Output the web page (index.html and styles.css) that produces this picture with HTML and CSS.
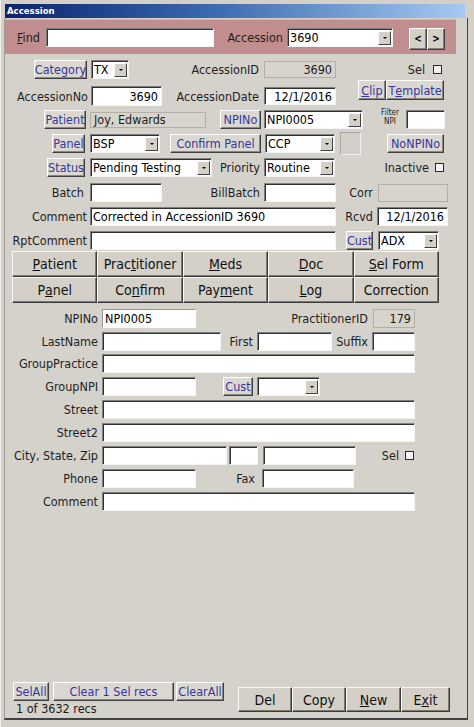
FILE: index.html
```html
<!DOCTYPE html>
<html>
<head>
<meta charset="utf-8">
<title>Accession</title>
<link rel="stylesheet" href="styles.css">
</head>
<body>
<div class="win">
  <div class="title">Accession</div>
  <div class="content">
    <div class="findbar">
      <span class="lbl w35"><u>F</u>ind</span>
      <div class="inp ml6 w168"></div>
      <span class="lbl w69">Accession</span>
      <div class="inp combo ml4 w106"><span class="val">3690</span><span class="dd"></span></div>
      <div class="nav ml16"><span class="navbtn">&lt;</span><span class="navbtn">&gt;</span></div>
    </div>

    <div class="row r1">
      <span class="btn ml29 w53">Category</span>
      <div class="inp combo ml4 w38"><span class="val">TX</span><span class="dd"></span></div>
      <span class="lbl w130">AccessionID</span>
      <div class="ro num ml5 w72 h17">3690</div>
      <span class="lbl w89">Sel</span>
      <span class="chk ml8"></span>
    </div>

    <div class="row r2">
      <span class="lbl w83">AccessionNo</span>
      <div class="inp num ml3 w71 h20">3690</div>
      <span class="lbl w97">AccessionDate</span>
      <div class="inp num ml5 w72 h18">12/1/2016</div>
      <div class="pair ml22">
        <span class="btn w28"><u>C</u>lip</span><span class="btn w58">T<u>e</u>mplate</span>
      </div>
    </div>

    <div class="row r3">
      <span class="btn ml39 w42">Patient</span>
      <div class="ro ml4 w116 h16">Joy, Edwards</div>
      <span class="btn ml14 w41">NPINo</span>
      <div class="inp combo ml3 w99"><span class="val">NPI0005</span><span class="dd"></span></div>
      <span class="filter ml17 w20">Filter<br>NPI</span>
      <div class="inp ml6 w39"></div>
    </div>

    <div class="row r4">
      <span class="btn ml47 w33">Panel</span>
      <div class="inp combo ml5 w70"><span class="val">BSP</span><span class="dd"></span></div>
      <span class="btn ml10 w91">Confirm Panel</span>
      <div class="inp combo ml4 w70"><span class="val">CCP</span><span class="dd"></span></div>
      <span class="swatch ml5"></span>
      <span class="btn ml26 w57">NoNPINo</span>
    </div>

    <div class="row r5">
      <span class="btn ml42 w38">Status</span>
      <div class="inp combo ml5 w122"><span class="val">Pending Testing</span><span class="dd"></span></div>
      <span class="lbl w48">Priority</span>
      <div class="inp combo ml4 w71"><span class="val">Routine</span><span class="dd"></span></div>
      <span class="lbl w94">Inactive</span>
      <span class="chk ml6"></span>
    </div>

    <div class="row r6">
      <span class="lbl w79">Batch</span>
      <div class="inp ml6 w72"></div>
      <span class="lbl w98">BillBatch</span>
      <div class="inp ml4 w72"></div>
      <span class="lbl w37">Corr</span>
      <div class="ro ml5 w70 h18"></div>
    </div>

    <div class="row r7">
      <span class="lbl w82">Comment</span>
      <div class="inp ml3 w246">Corrected in AccessionID 3690</div>
      <span class="lbl w37">Rcvd</span>
      <div class="inp num ml4 w71">12/1/2016</div>
    </div>

    <div class="row r8">
      <span class="lbl w82">RptComment</span>
      <div class="inp ml3 w246"></div>
      <span class="btn ml10 w27">Cust</span>
      <div class="inp combo ml5 w61"><span class="val">ADX</span><span class="dd"></span></div>
    </div>

    <div class="tabs">
      <span class="tab"><u>P</u>atient</span>
      <span class="tab">Prac<u>t</u>itioner</span>
      <span class="tab"><u>M</u>eds</span>
      <span class="tab"><u>D</u>oc</span>
      <span class="tab"><u>S</u>el Form</span>
      <span class="tab">P<u>a</u>nel</span>
      <span class="tab">Co<u>n</u>firm</span>
      <span class="tab">Pay<u>m</u>ent</span>
      <span class="tab"><u>L</u>og</span>
      <span class="tab">Correction</span>
    </div>

    <div class="row s1">
      <span class="lbl w93">NPINo</span>
      <div class="inp thin ml4 w94">NPI0005</div>
      <span class="lbl w172">PractitionerID</span>
      <div class="ro num ml5 w42">179</div>
    </div>
    <div class="row s2">
      <span class="lbl w93">LastName</span>
      <div class="inp ml4 w119"></div>
      <span class="lbl w32">First</span>
      <div class="inp ml4 w75"></div>
      <span class="lbl w36">Suffix</span>
      <div class="inp ml4 w43"></div>
    </div>
    <div class="row s3">
      <span class="lbl w93">GroupPractice</span>
      <div class="inp ml4 w313"></div>
    </div>
    <div class="row s4">
      <span class="lbl w93">GroupNPI</span>
      <div class="inp ml4 w94"></div>
      <span class="btn ml27 w30">Cust</span>
      <div class="inp combo ml4 w63"><span class="val"></span><span class="dd"></span></div>
    </div>
    <div class="row s4">
      <span class="lbl w93">Street</span>
      <div class="inp ml4 w313"></div>
    </div>
    <div class="row s4">
      <span class="lbl w93">Street2</span>
      <div class="inp ml4 w313"></div>
    </div>
    <div class="row s4">
      <span class="lbl w93">City, State, Zip</span>
      <div class="inp ml4 w125"></div>
      <div class="inp ml2 w29"></div>
      <div class="inp ml5 w93"></div>
      <span class="lbl w43">Sel</span>
      <span class="chk ml6"></span>
    </div>
    <div class="row s4">
      <span class="lbl w93">Phone</span>
      <div class="inp ml4 w94"></div>
      <span class="lbl w59">Fax</span>
      <div class="inp ml7 w92"></div>
    </div>
    <div class="row s4">
      <span class="lbl w93">Comment</span>
      <div class="inp ml4 w313"></div>
    </div>

    <div class="footer">
      <div class="fleft">
        <div class="frow">
          <span class="btn ml8 w36">SelAll</span>
          <span class="btn ml4 w121">Clear 1 Sel recs</span>
          <span class="btn ml2 w48">ClearAll</span>
        </div>
        <div class="count">1 of 3632 recs</div>
      </div>
      <div class="fright">
        <span class="bigbtn w54">Del</span>
        <span class="bigbtn w54">Copy</span>
        <span class="bigbtn w55"><u>N</u>ew</span>
        <span class="bigbtn w49">E<u>x</u>it</span>
      </div>
    </div>
  </div>
</div>
</body>
</html>
```

FILE: styles.css
```css
* { box-sizing: border-box; }
html, body { margin: 0; padding: 0; }
body {
  width: 474px;
  height: 727px;
  overflow: hidden;
  background: #d4d0c8;
  font-family: "DejaVu Sans Condensed", "DejaVu Sans", "Liberation Sans", sans-serif;
  font-stretch: condensed;
  font-size: 12.5px;
  color: #1e1e1e;
}
u { text-decoration: underline; text-underline-offset: 1px; }

.win {
  width: 474px;
  height: 727px;
  padding: 4px 6px 7px 4px;
  display: flex;
  flex-direction: column;
  background: #d4d0c8;
  border-left: 1px solid #f4f2ee;
}
.title {
  height: 14px;
  width: 460px;
  flex: none;
  background: linear-gradient(90deg, #0a246a 0%, #3a6ab0 45%, #a6caf0 100%);
  color: #fff;
  font-weight: bold;
  font-size: 9.5px;
  line-height: 14px;
  padding-left: 2px;
}
.content {
  flex: 1;
  display: flex;
  flex-direction: column;
  width: 464px;
  margin-left: -1px;
  border-right: 1px solid #404040;
  border-bottom: 2px solid #404040;
  border-left: 1px solid #a09c94;
  background: #d5d2cc;
}

/* find bar */
.findbar {
  height: 35px;
  width: 451px;
  margin-top: 1px;
  background: #c08e8e;
  border-top: 1px solid #d8b2b2;
  display: flex;
  align-items: center;
  flex: none;
}
.nav { display: flex; height: 22px; margin-top: 3px; }
.navbtn {
  width: 18px;
  height: 22px;
  background: #d4d0c8;
  border: 1px solid;
  border-color: #fff #404040 #404040 #fff;
  box-shadow: inset -1px -1px 0 #808080;
  display: flex;
  align-items: center;
  justify-content: center;
  font-weight: bold;
  font-size: 10px;
  color: #000;
}

/* rows */
.row {
  display: flex;
  align-items: center;
  height: 19px;
  flex: none;
}
.r1 { margin-top: 6px; }
.r2 { margin-top: 7px; height: 20px; }
.r3 { margin-top: 4px; }
.r4 { margin-top: 5px; }
.r5 { margin-top: 5px; }
.r6 { margin-top: 6px; }
.r7 { margin-top: 5px; }
.r8 { margin-top: 5px; }
.s1 { margin-top: 6px; }
.s2 { margin-top: 4px; }
.s3 { margin-top: 3px; }
.s4 { margin-top: 4px; }

.lbl {
  flex: none;
  text-align: right;
  white-space: nowrap;
  color: #1e1e1e;
}
.btn {
  flex: none;
  height: 19px;
  background: #dbd8d2;
  border: 1px solid;
  border-color: #fff #404040 #404040 #fff;
  box-shadow: inset -1px -1px 0 #8a8680;
  color: #35359e;
  display: flex;
  align-items: center;
  justify-content: center;
  white-space: nowrap;
}
.pair { display: flex; align-self: flex-start; margin-top: -6px; height: 20px; }
.pair .btn { height: 20px; }

.inp {
  flex: none;
  height: 19px;
  background: #fff;
  border: 1px solid;
  border-color: #808080 #f4f4f4 #f4f4f4 #808080;
  box-shadow: inset 1px 1px 0 #303030;
  display: flex;
  align-items: center;
  padding-left: 2px;
  color: #000;
  white-space: nowrap;
  overflow: hidden;
}
.inp.thin { box-shadow: none; border-color: #9a968e #fff #fff #9a968e; }
.num { justify-content: flex-end; padding-right: 3px; }
.ro {
  flex: none;
  height: 19px;
  background: #d7d4ce;
  border: 1px solid #b3afa8;
  display: flex;
  align-items: center;
  padding-left: 3px;
  color: #202020;
  white-space: nowrap;
}
.h16 { height: 16px; }
.h17 { height: 17px; }
.h18 { height: 18px; }
.h20 { height: 20px; }

.combo { padding-right: 1px; }
.combo .val { flex: 1; overflow: hidden; }
.dd {
  width: 13px;
  flex: none;
  align-self: stretch;
  margin: 2px 0 1px 0;
  background: #d4d0c8;
  border: 1px solid;
  border-color: #fff #404040 #404040 #fff;
  display: flex;
  align-items: center;
  justify-content: center;
}
.dd::after {
  content: "";
  width: 0;
  height: 0;
  border-left: 2px solid transparent;
  border-right: 2px solid transparent;
  border-top: 2px solid #000;
}

.chk {
  flex: none;
  width: 9px;
  height: 9px;
  border: 1px solid #2a2a2a;
  background: #f2f2f0;
}
.filter {
  flex: none;
  align-self: flex-start;
  margin-top: -2px;
  font-size: 8px;
  line-height: 9px;
  text-align: center;
  color: #222;
}
.swatch {
  flex: none;
  width: 21px;
  height: 23px;
  background: #d2cfc9;
  border: 1px solid;
  border-color: #aaa69e #f2f0ec #f2f0ec #aaa69e;
}

/* command buttons */
.tabs {
  display: grid;
  grid-template-columns: repeat(5, 1fr);
  width: 427px;
  margin-left: 7px;
  margin-top: 1px;
  flex: none;
}
.tab, .bigbtn {
  height: 26px;
  background: #d4d0c8;
  border: 1px solid;
  border-color: #f8f8f8 #3c3c3c #3c3c3c #f8f8f8;
  box-shadow: inset -1px -1px 0 #7c7872;
  display: flex;
  align-items: center;
  justify-content: center;
  font-size: 14px;
  color: #101010;
  white-space: nowrap;
}

/* footer */
.footer {
  margin-top: auto;
  height: 36px;
  display: flex;
  align-items: flex-start;
  flex: none;
}
.fleft { display: flex; flex-direction: column; }
.frow { display: flex; height: 19px; }
.count { margin-left: 11px; line-height: 15px; color: #1a1a1a; }
.fright { display: flex; margin-left: 14px; margin-top: 5px; }
.bigbtn { height: 25px; flex: none; }

/* widths */
.w20 { width: 20px; } .w27 { width: 27px; } .w28 { width: 28px; } .w29 { width: 29px; }
.w30 { width: 30px; } .w32 { width: 32px; } .w33 { width: 33px; } .w35 { width: 35px; }
.w36 { width: 36px; } .w37 { width: 37px; } .w38 { width: 38px; } .w39 { width: 39px; }
.w41 { width: 41px; } .w42 { width: 42px; } .w43 { width: 43px; } .w48 { width: 48px; }
.w49 { width: 49px; } .w53 { width: 53px; } .w54 { width: 54px; } .w55 { width: 55px; }
.w57 { width: 57px; } .w58 { width: 58px; } .w59 { width: 59px; } .w61 { width: 61px; }
.w63 { width: 63px; } .w69 { width: 69px; } .w70 { width: 70px; } .w71 { width: 71px; }
.w72 { width: 72px; } .w75 { width: 75px; } .w79 { width: 79px; } .w82 { width: 82px; }
.w83 { width: 83px; } .w89 { width: 89px; } .w91 { width: 91px; } .w92 { width: 92px; }
.w93 { width: 93px; } .w94 { width: 94px; } .w97 { width: 97px; } .w98 { width: 98px; }
.w99 { width: 99px; } .w106 { width: 106px; } .w116 { width: 116px; } .w119 { width: 119px; }
.w121 { width: 121px; } .w122 { width: 122px; } .w125 { width: 125px; } .w130 { width: 130px; }
.w168 { width: 168px; } .w172 { width: 172px; } .w246 { width: 246px; } .w313 { width: 313px; }

/* left offsets */
.ml2 { margin-left: 2px; } .ml3 { margin-left: 3px; } .ml4 { margin-left: 4px; }
.ml5 { margin-left: 5px; } .ml6 { margin-left: 6px; } .ml7 { margin-left: 7px; }
.ml8 { margin-left: 8px; } .ml10 { margin-left: 10px; } .ml14 { margin-left: 14px; }
.ml16 { margin-left: 16px; } .ml17 { margin-left: 17px; } .ml22 { margin-left: 22px; }
.ml26 { margin-left: 26px; } .ml27 { margin-left: 27px; } .ml29 { margin-left: 29px; }
.ml39 { margin-left: 39px; } .ml42 { margin-left: 42px; } .ml47 { margin-left: 47px; }
```
